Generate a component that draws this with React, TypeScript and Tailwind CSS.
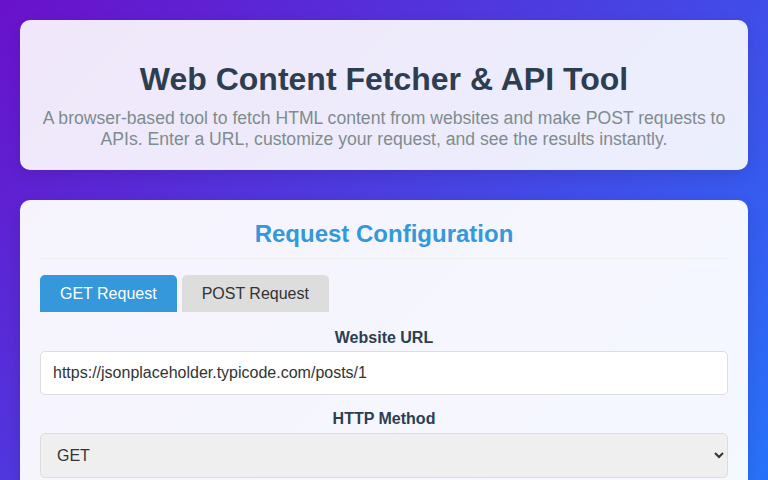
import React, { useState } from 'react';

const App: React.FC = () => {
  const [activeTab, setActiveTab] = useState('get');
  const [url, setUrl] = useState('https://jsonplaceholder.typicode.com/posts/1');
  const [method, setMethod] = useState('GET');

  return (
    <div className="min-h-screen bg-[linear-gradient(135deg,#6a11cb_0%,#2575fc_100%)] p-5 font-['Liberation_Sans',Arial,sans-serif] text-[#333]">
      <header className="rounded-[10px] bg-white/90 p-5 text-center shadow-[0_5px_15px_rgba(0,0,0,0.1)]">
        <h1 className="mt-[21px] mb-[10px] text-[32px] leading-[37px] font-bold text-[#2c3e50]">
          Web Content Fetcher &amp; API Tool
        </h1>
        <p className="text-[17.6px] leading-[21px] text-[#7f8c8d]">
          A browser-based tool to fetch HTML content from websites and make POST requests to APIs. Enter a URL, customize your request, and see the results instantly.
        </p>
      </header>

      <section className="mt-[30px] rounded-[10px] bg-white/95 p-5 shadow-[0_5px_15px_rgba(0,0,0,0.1)]">
        <h2 className="border-b border-[#eee] pb-[10px] text-center text-[24px] leading-[28px] font-bold text-[#3498db]">
          Request Configuration
        </h2>

        <div className="mt-4 flex gap-[5px]">
          <button
            onClick={() => setActiveTab('get')}
            className={`rounded-t-[5px] px-5 py-[9px] text-[16px] leading-[19px] ${activeTab === 'get' ? 'bg-[#3498db] text-white' : 'bg-[#ddd] text-[#333]'}`}
          >
            GET Request
          </button>
          <button
            onClick={() => setActiveTab('post')}
            className={`rounded-t-[5px] px-5 py-[9px] text-[16px] leading-[19px] ${activeTab === 'post' ? 'bg-[#3498db] text-white' : 'bg-[#ddd] text-[#333]'}`}
          >
            POST Request
          </button>
        </div>

        <div className="mt-4">
          <label htmlFor="url" className="mb-1 block text-center text-[16px] leading-[19px] font-bold text-[#2c3e50]">
            Website URL
          </label>
          <input
            id="url"
            type="text"
            value={url}
            onChange={(e) => setUrl(e.target.value)}
            className="block h-[44px] w-full rounded-[5px] border border-[#ddd] bg-white px-3 text-[16px] text-[#333] outline-none"
          />
        </div>

        <div className="mt-[14px]">
          <label htmlFor="method" className="mb-[5px] block text-center text-[16px] leading-[19px] font-bold text-[#2c3e50]">
            HTTP Method
          </label>
          <select
            id="method"
            value={method}
            onChange={(e) => setMethod(e.target.value)}
            className="block h-[45px] w-full rounded-[5px] border border-[#ddd] bg-[#efefef] px-3 text-[16px] text-[#333]"
          >
            <option>GET</option>
            <option>POST</option>
            <option>PUT</option>
            <option>DELETE</option>
          </select>
        </div>
      </section>
    </div>
  );
};

export default App;
